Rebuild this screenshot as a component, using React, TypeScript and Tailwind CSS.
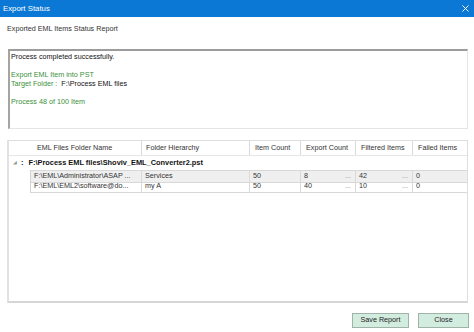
import React from "react";

const cols = "grid grid-cols-[22px_111px_108px_51px_55px_57px_1fr]";

function Cell({ children, last, dots }: { children?: React.ReactNode; last?: boolean; dots?: boolean }) {
  return (
    <div className={`flex items-center justify-between pl-[3px] pr-[4px] whitespace-nowrap overflow-hidden ${last ? "" : "border-r border-[#dadada]"}`}>
      <span>{children}</span>
      {dots && <span className="text-[#8a8a8a]">...</span>}
    </div>
  );
}

export default function App() {
  return (
    <div className="w-[474px] h-[332px] bg-white flex flex-col overflow-hidden font-['Liberation_Sans',Arial,sans-serif] text-[#1a1a1a]">
      {/* Title bar */}
      <div className="h-[17px] bg-[#0b78d6] flex items-center justify-between pl-[3px] pr-[4px] text-white shrink-0">
        <span className="text-[7.8px]">Export Status</span>
        <svg width="7" height="7" viewBox="0 0 7 7" className="mr-[1px]">
          <path d="M0.5 0.5 L6.5 6.5 M6.5 0.5 L0.5 6.5" stroke="white" strokeWidth="1" />
        </svg>
      </div>

      {/* Subtitle */}
      <div className="h-[23px] flex items-center pl-[7px] pt-[1px] text-[7.2px] text-[#333] shrink-0">
        Exported EML Items Status Report
      </div>

      <div className="h-[9px] shrink-0" />

      {/* Text box */}
      <div className="ml-[8px] mr-[6px] h-[80px] shrink-0 border-solid border-t-2 border-l-2 border-r border-b border-t-[#9c9c9c] border-l-[#a4a4a4] border-r-[#e4e4e4] border-b-[#e4e4e4] pl-[1px] pt-[1px] text-[7.2px] leading-[9px]">
        <div className="text-[#111]">Process completed successfully.</div>
        <div className="h-[9px]" />
        <div className="text-[#3b8f3b]">Export EML Item into PST</div>
        <div>
          <span className="text-[#3b8f3b]">Target Folder :</span>
          <span className="text-[#111]">&nbsp; F:\Process EML files</span>
        </div>
        <div className="h-[9px]" />
        <div className="text-[#3b8f3b]">Process 48 of 100 Item</div>
      </div>

      <div className="h-[11px] shrink-0" />

      {/* Table */}
      <div className="ml-[7px] mr-[6px] h-[163px] shrink-0 border-solid border border-[#dedede] border-l-2 border-l-[#e2e2e2] border-b-2 border-b-[#d6d6d6] text-[7.2px] text-[#333] flex flex-col">
        <div className="h-[15px] grid grid-cols-[133px_108px_51px_55px_57px_1fr] border-b border-[#e6e6e6] shrink-0">
          <div className="flex items-center pl-[28px] border-r border-[#dadada]">EML Files Folder Name</div>
          <div className="flex items-center pl-[4px] border-r border-[#dadada]">Folder Hierarchy</div>
          <div className="flex items-center pl-[5px] border-r border-[#dadada]">Item Count</div>
          <div className="flex items-center pl-[5px] border-r border-[#dadada]">Export Count</div>
          <div className="flex items-center pl-[5px] border-r border-[#dadada]">Filtered Items</div>
          <div className="flex items-center pl-[5px]">Failed Items</div>
        </div>
        <div className="h-[14px] flex items-center shrink-0 text-[#111] font-bold text-[7.4px]">
          <span className="pl-[4px] text-[#999] text-[5px] font-normal">◢</span>
          <span className="pl-[4px]">:</span>
          <span className="pl-[5px]">F:\Process EML files\Shoviv_EML_Converter2.pst</span>
        </div>
        <div className={`${cols} h-[11px] shrink-0`}>
          <div className="border-r border-[#d4d4d4]" />
          <div className="col-span-6 grid grid-cols-[111px_108px_51px_55px_57px_1fr] bg-[#efefef] border-t border-b border-[#d8d8d8]">
            <Cell>F:\EML\Administrator\ASAP ...</Cell>
            <Cell>Services</Cell>
            <Cell>50</Cell>
            <Cell dots>8</Cell>
            <Cell dots>42</Cell>
            <Cell last>0</Cell>
          </div>
        </div>
        <div className={`${cols} h-[10px] shrink-0`}>
          <div className="border-r border-[#d4d4d4]" />
          <div className="col-span-6 grid grid-cols-[111px_108px_51px_55px_57px_1fr] border-b border-[#d8d8d8]">
            <Cell>F:\EML\EML2\software@do...</Cell>
            <Cell>my A</Cell>
            <Cell>50</Cell>
            <Cell dots>40</Cell>
            <Cell dots>10</Cell>
            <Cell last>0</Cell>
          </div>
        </div>
        <div className="flex-1" />
      </div>

      {/* Buttons */}
      <div className="flex-1 flex items-start justify-end gap-[9px] pr-[5px] pt-[10px]">
        <button className="w-[57px] h-[15px] bg-[#d3ece0] border border-[#9fb3a8] text-[7.2px] text-[#222] flex items-center justify-center">
          Save Report
        </button>
        <button className="w-[51px] h-[15px] bg-[#d3ece0] border border-[#9fb3a8] text-[7.2px] text-[#222] flex items-center justify-center">
          Close
        </button>
      </div>
    </div>
  );
}
